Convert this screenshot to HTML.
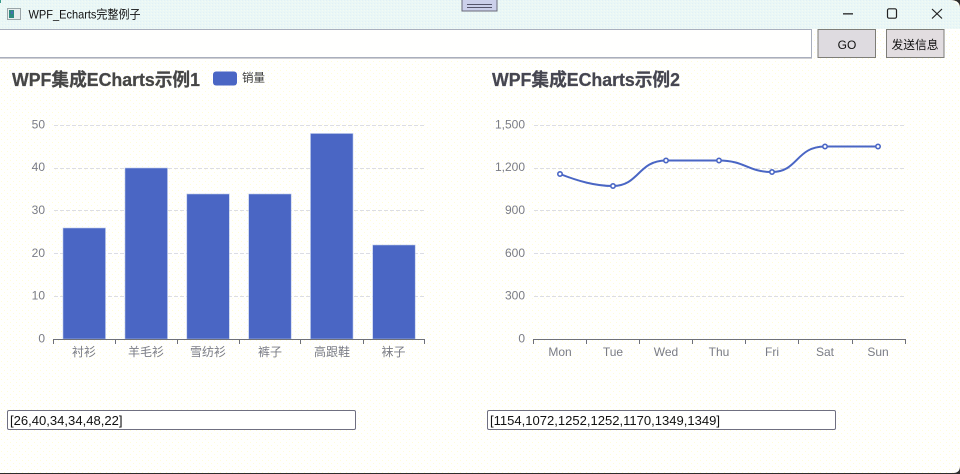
<!DOCTYPE html>
<html><head><meta charset="utf-8">
<style>
html,body{margin:0;padding:0;background:#fff}
body{width:960px;height:474px;overflow:hidden;position:relative}
svg{position:absolute;left:0;top:0;display:block}
text{font-family:"Liberation Sans","Noto Sans CJK SC",sans-serif}
</style></head><body>
<svg width="960" height="474" viewBox="0 0 960 474" xmlns="http://www.w3.org/2000/svg">
<defs>
<pattern id="dots" width="6" height="6" patternUnits="userSpaceOnUse">
<rect width="6" height="6" fill="#fffffe"/>
<rect x="1" y="1" width="1" height="1" fill="#fffcd8"/>
<rect x="4" y="4" width="1" height="1" fill="#fffcd8"/>
</pattern>
<pattern id="tb" width="3" height="3" patternUnits="userSpaceOnUse">
<rect width="3" height="3" fill="#eaf7f6"/>
<rect x="1" y="1" width="1" height="1" fill="#f3fbf3"/>
<rect x="2" y="0" width="1" height="1" fill="#e2f1f5"/>
</pattern>
</defs>
<rect width="960" height="474" fill="#2d2d2d"/>
<path d="M0 0H950Q960 0 960 8V466Q960 473 953 473H0Z" fill="url(#dots)"/>
<path d="M0 0H950Q956 1 960 8V29H0Z" fill="url(#tb)"/>
<rect x="0" y="0" width="1" height="3" fill="#3a9a8a"/>
<!-- top widget -->
<rect x="462" y="-2" width="35" height="13" fill="#ccd0ea" stroke="#6a6a78"/>
<rect x="467" y="4" width="25" height="1" fill="#55556a"/>
<rect x="467" y="7" width="25" height="1" fill="#55556a"/>
<!-- window icon -->
<rect x="7.5" y="8.5" width="13" height="11" fill="#e8eeee" stroke="#9aa5a8"/>
<rect x="9" y="10" width="5" height="8" fill="#2e8a80"/>
<rect x="11" y="11" width="2" height="3" fill="#4a70b0"/>
<text x="28.5" y="18.5" font-size="12" fill="#111" textLength="112" lengthAdjust="spacingAndGlyphs">WPF_Echarts完整例子</text>
<!-- window controls -->
<rect x="843" y="13.2" width="10" height="1.3" fill="#222"/>
<rect x="887.5" y="8.8" width="9" height="9.400" rx="1.5" fill="none" stroke="#222" stroke-width="1.200"/>
<path d="M932 9L942 18.500M942 9L932 18.500" stroke="#222" stroke-width="1.200" fill="none"/>
<!-- input -->
<rect x="-2" y="29.5" width="813.5" height="28" fill="#fffffe" stroke="#a9afbd"/>
<rect x="0" y="58" width="812" height="1" fill="#cfcfd2"/>
<!-- buttons -->
<rect x="818" y="29.5" width="57.5" height="28" fill="#dedbe0" stroke="#7d7d78"/>
<text x="847" y="49" font-size="12" fill="#111" text-anchor="middle">GO</text>
<rect x="886.5" y="29.5" width="57.5" height="28" fill="#e2dde0" stroke="#7d7d78"/>
<text x="915" y="49" font-size="12" fill="#111" text-anchor="middle" textLength="47" lengthAdjust="spacingAndGlyphs">发送信息</text>

<!-- chart 1 heading -->
<text x="12" y="86" font-size="18" font-weight="bold" fill="#464646" stroke="#464646" stroke-width="0.25" textLength="188" lengthAdjust="spacingAndGlyphs">WPF集成ECharts示例1</text>
<rect x="213" y="71.5" width="24" height="14" rx="3" fill="#4a66c4"/>
<text x="242" y="81.5" font-size="11.5" fill="#333">销量</text>
<text x="492" y="86" font-size="18" font-weight="bold" fill="#464650" stroke="#464650" stroke-width="0.25" textLength="188" lengthAdjust="spacingAndGlyphs">WPF集成ECharts示例2</text>

<!-- grids -->
<g stroke="#dcdde3" stroke-dasharray="4 2" stroke-width="1">
<path d="M54 125.5H424M54 168.5H424M54 210.5H424M54 253.5H424M54 296.5H424"/>
<path d="M534 125.5H905M534 168.5H905M534 210.5H905M534 253.5H905M534 296.5H905"/>
</g>

<!-- bars -->
<g fill="#4a66c4" stroke="#b8c6ea" stroke-width="0.6">
<rect x="63" y="228" width="42.5" height="111"/>
<rect x="125" y="168" width="42.5" height="171"/>
<rect x="186.8" y="194" width="42.5" height="145"/>
<rect x="248.7" y="194" width="42.5" height="145"/>
<rect x="310.5" y="133.5" width="42.5" height="205.5"/>
<rect x="372.7" y="245" width="42.5" height="94"/>
</g>

<!-- axis 1 -->
<g stroke="#6e7079" fill="none" stroke-width="1">
<path d="M53.5 344V339.5H424.5V344"/>
<path d="M115.5 339.5V344M177.5 339.5V344M239.5 339.5V344M300.5 339.5V344M363.5 339.5V344"/>
<path d="M533.5 344V339.5H905.5V344"/>
<path d="M586.5 339.5V344M639.5 339.5V344M692.5 339.5V344M745.5 339.5V344M798.5 339.5V344M852.5 339.5V344"/>
</g>
<g font-size="12" fill="#7a7c85" text-anchor="end">
<text x="45" y="128.5">50</text><text x="45" y="171">40</text><text x="45" y="214">30</text><text x="45" y="257">20</text><text x="45" y="299.5">10</text><text x="45" y="342.5">0</text>
<text x="525" y="128.5">1,500</text><text x="525" y="171">1,200</text><text x="525" y="214">900</text><text x="525" y="257">600</text><text x="525" y="299.5">300</text><text x="525" y="342.5">0</text>
</g>
<g font-size="12" fill="#7a7c85" text-anchor="middle">
<text x="84" y="356">衬衫</text><text x="146" y="356">羊毛衫</text><text x="208" y="356">雪纺衫</text><text x="270" y="356">裤子</text><text x="332" y="356">高跟鞋</text><text x="393.5" y="356">袜子</text>
<text x="560" y="356">Mon</text><text x="613" y="356">Tue</text><text x="666" y="356">Wed</text><text x="719" y="356">Thu</text><text x="772" y="356">Fri</text><text x="825" y="356">Sat</text><text x="878" y="356">Sun</text>
</g>

<!-- line -->
<path d="M560 174C578 181 595 186 613 186C639 186 638 160.5 666 160.5L719 160.5C745 160.5 748 172 772 172C798 172 796 146.5 825 146.5L878 146.5" fill="none" stroke="#4a66c4" stroke-width="2"/>
<g fill="#fff" stroke="#4a66c4" stroke-width="1.600">
<circle cx="560" cy="174" r="2.200"/><circle cx="613" cy="186" r="2.200"/><circle cx="666" cy="160.500" r="2.200"/><circle cx="719" cy="160.500" r="2.200"/><circle cx="772" cy="172" r="2.200"/><circle cx="825" cy="146.500" r="2.200"/><circle cx="878" cy="146.500" r="2.200"/>
</g>

<!-- text boxes -->
<rect x="7.500" y="410.500" width="348" height="19" rx="1.500" fill="#fffffe" stroke="#6f6f80"/>
<text x="10" y="425" font-size="13" fill="#111" textLength="112.500" lengthAdjust="spacingAndGlyphs">[26,40,34,34,48,22]</text>
<rect x="487.500" y="410.500" width="348" height="19" rx="1.500" fill="#fffffe" stroke="#6f6f80"/>
<text x="490" y="425" font-size="13" fill="#111" textLength="230" lengthAdjust="spacingAndGlyphs">[1154,1072,1252,1252,1170,1349,1349]</text>
</svg>
</body></html>
